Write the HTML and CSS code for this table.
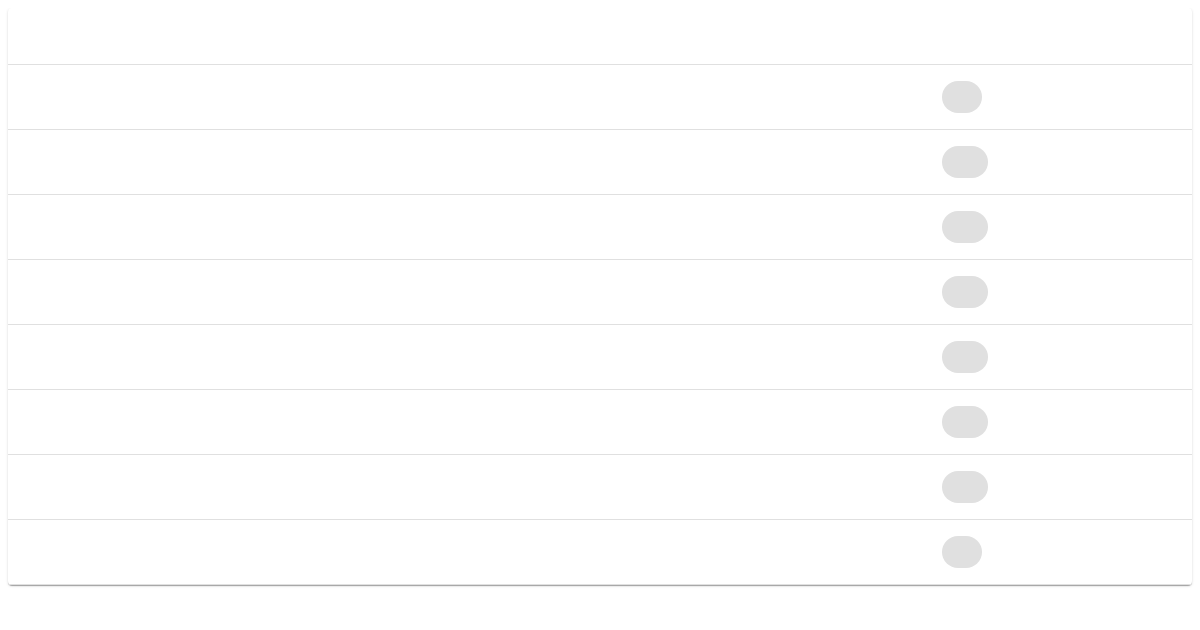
FILE: index.html
```html
<!DOCTYPE html>
<html>
<head>
<meta charset="utf-8">
<link rel="stylesheet" href="styles.css">
</head>
<body>
<div class="paper">
  <div class="row head"><div class="cell"></div><div class="cell"></div></div>
  <div class="row"><div class="cell"></div><div class="cell chipcell"><span class="chip narrow"></span></div></div>
  <div class="row"><div class="cell"></div><div class="cell chipcell"><span class="chip"></span></div></div>
  <div class="row"><div class="cell"></div><div class="cell chipcell"><span class="chip"></span></div></div>
  <div class="row"><div class="cell"></div><div class="cell chipcell"><span class="chip"></span></div></div>
  <div class="row"><div class="cell"></div><div class="cell chipcell"><span class="chip"></span></div></div>
  <div class="row"><div class="cell"></div><div class="cell chipcell"><span class="chip"></span></div></div>
  <div class="row"><div class="cell"></div><div class="cell chipcell"><span class="chip"></span></div></div>
  <div class="row"><div class="cell"></div><div class="cell chipcell"><span class="chip narrow"></span></div></div>
</div>
</body>
</html>
```
FILE: styles.css
```css
html, body {
  margin: 0;
  padding: 0;
  background: #fff;
  font-family: Roboto, "Liberation Sans", sans-serif;
}
body {
  padding: 8px;
}
.paper {
  background: #fff;
  border-radius: 4px;
  box-shadow: 0 2px 1px -1px rgba(0,0,0,0.2), 0 1px 1px 0 rgba(0,0,0,0.14), 0 1px 3px 0 rgba(0,0,0,0.12);
  clip-path: inset(0 -6px -6px -6px);
}
.row {
  display: grid;
  grid-template-columns: 918px 1fr;
  height: 65px;
  box-sizing: border-box;
  border-bottom: 1px solid #e0e0e0;
}
.row.head {
  height: 57px;
}
.cell {
  display: flex;
  align-items: center;
  padding: 0 16px;
}
.chip {
  display: inline-block;
  width: 46px;
  height: 32px;
  border-radius: 16px;
  background: #e0e0e0;
}
.chip.narrow {
  width: 40px;
}
```
